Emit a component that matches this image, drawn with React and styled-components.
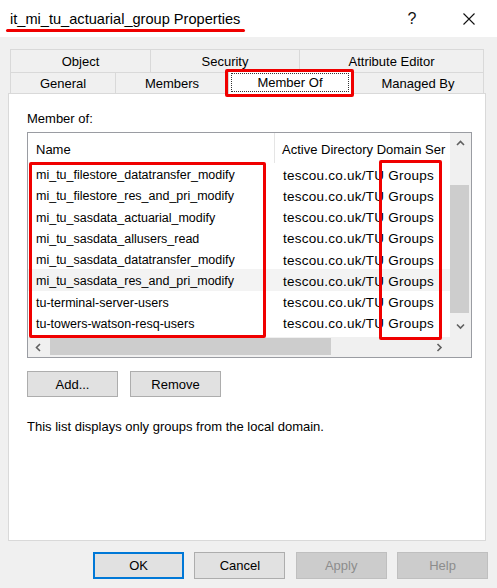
import React from 'react';
import styled, { createGlobalStyle, css } from 'styled-components';

const GlobalStyle = createGlobalStyle`
  html, body { margin: 0; padding: 0; background: #f0f0f0; }
  body {
    font-family: "Liberation Sans", Arial, sans-serif;
    font-size: 13px;
    color: #000;
  }
  * { box-sizing: border-box; }
`;

const RED = '#f00000';

const Window = styled.div`
  width: 497px;
  height: 588px;
  display: flex;
  flex-direction: column;
  background: #f0f0f0;
  overflow: hidden;
`;

const TitleBar = styled.div`
  height: 37px;
  flex: none;
  background: #fff;
  display: flex;
  align-items: center;
  padding-left: 10px;
  padding-right: 5px;
`;

const Title = styled.div`
  flex: 1;
  font-size: 14.6px;
  line-height: 18px;
  padding-top: 1px;
`;

const TitleText = styled.span`
  position: relative;
  &::after {
    content: '';
    position: absolute;
    left: -4px;
    right: -5px;
    bottom: -5px;
    height: 3px;
    border-radius: 2px;
    background: ${RED};
  }
`;

const Caption = styled.div`
  width: 46px;
  height: 37px;
  display: flex;
  align-items: center;
  justify-content: center;
  font-size: 16px;
  color: #111;
  margin-left: ${p => p.$gap || 0}px;
`;

const TabStrip = styled.div`
  flex: none;
  margin: 12px 13px 0 10px;
  display: flex;
  flex-direction: column;
  position: relative;
  z-index: 2;
`;

const TabRow = styled.div`
  display: grid;
  grid-template-columns: ${p => p.$cols};
  height: ${p => p.$h}px;
`;

const Tab = styled.div`
  display: flex;
  align-items: center;
  justify-content: center;
  background: #f0f0f0;
  border-top: 1px solid #d9d9d9;
  border-left: 1px solid #d9d9d9;
  ${p => p.$last && css`border-right: 1px solid #d9d9d9;`}
  color: #000;
  white-space: nowrap;
  padding-top: ${p => p.$pt || 0}px;
  ${p => p.$active && css`
    position: relative;
    background: #fff;
    margin: -2px 0 -2px 0;
    padding: 2px 2px 3px 2px;
    border-right: 1px solid #d9d9d9;
    z-index: 3;
    &::after {
      content: '';
      position: absolute;
      left: -4px;
      right: -3px;
      top: -2px;
      bottom: -2px;
      border: 3px solid ${RED};
      border-radius: 2px;
    }
  `}
`;

const FocusRect = styled.div`
  width: 100%;
  height: 100%;
  border: 1px dotted #333;
  display: flex;
  align-items: center;
  justify-content: center;
  padding-bottom: 1px;
`;

const Panel = styled.div`
  flex: none;
  height: 448px;
  margin: 0 11px 0 8px;
  background: #fff;
  border: 1px solid #d9d9d9;
  padding: 18px 13px 0 18px;
  display: flex;
  flex-direction: column;
  position: relative;
  z-index: 1;
`;

const Label = styled.div`
  line-height: 14px;
  margin-bottom: 6px;
`;

const ListBox = styled.div`
  position: relative;
  width: 445px;
  height: 226px;
  border: 1px solid #9a9ca2;
  display: grid;
  grid-template-columns: 1fr 21px;
  grid-template-rows: 1fr 20px;
`;

const ListContent = styled.div`
  overflow: hidden;
  display: flex;
  flex-direction: column;
`;

const HeaderRow = styled.div`
  display: grid;
  grid-template-columns: 247px 1fr;
  height: 30px;
  flex: none;
`;

const HeaderCell = styled.div`
  display: flex;
  align-items: center;
  padding-left: ${p => p.$pl}px;
  padding-top: 3px;
  white-space: nowrap;
  overflow: hidden;
  ${p => p.$divider && css`border-right: 1px solid #e5e5e5;`}
`;

const Row = styled.div`
  display: grid;
  grid-template-columns: 247px 1fr;
  height: 21.28px;
  flex: none;
  background: ${p => (p.$hover ? '#f3f3f3' : 'transparent')};
`;

const Cell = styled.div`
  display: flex;
  align-items: center;
  padding-left: ${p => p.$pl}px;
  padding-top: 3px;
  font-size: ${p => p.$size || 13}px;
  letter-spacing: ${p => p.$ls || 0}px;
  white-space: nowrap;
  overflow: hidden;
`;

const VScroll = styled.div`
  background: #f0f0f0;
  display: grid;
  grid-template-rows: 21px 1fr 21px;
`;

const HScroll = styled.div`
  background: #f0f0f0;
  display: grid;
  grid-template-columns: 21px 1fr 21px;
`;

const Corner = styled.div`
  background: #f0f0f0;
`;

const ArrowBtn = styled.div`
  display: flex;
  align-items: center;
  justify-content: center;
`;

const Track = styled.div`
  position: relative;
`;

const Thumb = styled.div`
  position: absolute;
  background: #cdcdcd;
  ${p => p.$vertical
    ? css`left: 0; right: 2px; top: ${p.$start}px; height: ${p.$size}px;`
    : css`top: 1px; bottom: 2px; left: ${p.$start}px; width: ${p.$size}px;`}
`;

const AnnotBox = styled.div`
  position: absolute;
  left: ${p => p.$x}px;
  top: ${p => p.$y}px;
  width: ${p => p.$w}px;
  height: ${p => p.$h}px;
  border: 3px solid ${RED};
  border-radius: 2px;
  pointer-events: none;
`;

const ButtonRow = styled.div`
  display: flex;
  gap: 12px;
  margin-top: 13px;
`;

const Button = styled.button`
  width: 91px;
  height: ${p => p.$h || 26}px;
  font: inherit;
  font-size: 13px;
  background: ${p => (p.$disabled ? '#cccccc' : '#e1e1e1')};
  color: ${p => (p.$disabled ? '#8c8c8c' : '#000')};
  border: ${p => (p.$primary ? '2px solid #0078d7' : p.$disabled ? '1px solid #bfbfbf' : '1px solid #adadad')};
  padding: 0;
  border-radius: 0;
  display: flex;
  align-items: center;
  justify-content: center;
`;

const Note = styled.div`
  margin-top: 23px;
  line-height: 14px;
`;

const Footer = styled.div`
  flex: none;
  display: flex;
  justify-content: flex-end;
  gap: 10.3px;
  margin-top: 11px;
  padding-right: 9px;
`;

const Chevron = ({ dir }) => {
  const paths = {
    up: 'M1 5 L4.5 1.5 L8 5',
    down: 'M1 1.5 L4.5 5 L8 1.5',
    left: 'M5 1 L1.5 4.5 L5 8',
    right: 'M1.5 1 L5 4.5 L1.5 8',
  };
  const vertical = dir === 'up' || dir === 'down';
  return (
    <svg width={vertical ? 9 : 7} height={vertical ? 7 : 9} viewBox={vertical ? '0 0 9 7' : '0 0 7 9'}>
      <path d={paths[dir]} fill="none" stroke="#606060" strokeWidth="1.6" />
    </svg>
  );
};

const CloseIcon = () => (
  <svg width="12" height="12" viewBox="0 0 12 12">
    <path d="M0.5 0.5 L11.5 11.5 M11.5 0.5 L0.5 11.5" stroke="#111" strokeWidth="1.1" />
  </svg>
);

const groups = [
  'mi_tu_filestore_datatransfer_modify',
  'mi_tu_filestore_res_and_pri_modify',
  'mi_tu_sasdata_actuarial_modify',
  'mi_tu_sasdata_allusers_read',
  'mi_tu_sasdata_datatransfer_modify',
  'mi_tu_sasdata_res_and_pri_modify',
  'tu-terminal-server-users',
  'tu-towers-watson-resq-users',
];

export default function App() {
  return (
    <Window>
      <GlobalStyle />
      <TitleBar>
        <Title><TitleText>it_mi_tu_actuarial_group Properties</TitleText></Title>
        <Caption>?</Caption>
        <Caption $gap={11}><CloseIcon /></Caption>
      </TitleBar>

      <TabStrip>
        <TabRow $cols="140px 149px 185px" $h={23}>
          <Tab>Object</Tab>
          <Tab>Security</Tab>
          <Tab $last>Attribute Editor</Tab>
        </TabRow>
        <TabRow $cols="105px 113px 124px 132px" $h={21}>
          <Tab $pt={1}>General</Tab>
          <Tab $pt={1}>Members</Tab>
          <Tab $active><FocusRect>Member Of</FocusRect></Tab>
          <Tab $last $pt={1}>Managed By</Tab>
        </TabRow>
      </TabStrip>

      <Panel>
        <Label>Member of:</Label>
        <ListBox>
          <ListContent>
            <HeaderRow>
              <HeaderCell $pl={8} $divider>Name</HeaderCell>
              <HeaderCell $pl={7}>Active Directory Domain Ser</HeaderCell>
            </HeaderRow>
            {groups.map((g, i) => (
              <Row key={g} $hover={i === 5}>
                <Cell $pl={8} $size={12.5}>{g}</Cell>
                <Cell $pl={8} $size={13.5} $ls={0.25}>tescou.co.uk/TU Groups</Cell>
              </Row>
            ))}
          </ListContent>
          <VScroll>
            <ArrowBtn><Chevron dir="up" /></ArrowBtn>
            <Track><Thumb $vertical $start={31} $size={128} /></Track>
            <ArrowBtn><Chevron dir="down" /></ArrowBtn>
          </VScroll>
          <HScroll>
            <ArrowBtn><Chevron dir="left" /></ArrowBtn>
            <Track><Thumb $start={1} $size={281} /></Track>
            <ArrowBtn><Chevron dir="right" /></ArrowBtn>
          </HScroll>
          <Corner />
          <AnnotBox $x={1} $y={29} $w={237} $h={176} />
          <AnnotBox $x={351} $y={27} $w={63} $h={180} />
        </ListBox>

        <ButtonRow>
          <Button>Add...</Button>
          <Button>Remove</Button>
        </ButtonRow>

        <Note>This list displays only groups from the local domain.</Note>
      </Panel>

      <Footer>
        <Button $h={27} $primary>OK</Button>
        <Button $h={27}>Cancel</Button>
        <Button $h={27} $disabled>Apply</Button>
        <Button $h={27} $disabled>Help</Button>
      </Footer>
    </Window>
  );
}
